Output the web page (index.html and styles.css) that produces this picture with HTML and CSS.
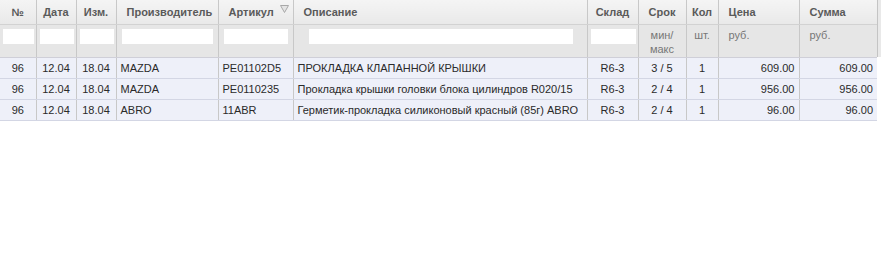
FILE: index.html
```html
<!DOCTYPE html>
<html lang="ru">
<head>
<meta charset="utf-8">
<title>Заказы</title>
<link rel="stylesheet" href="styles.css">
</head>
<body>
<div class="grid">
  <table class="orders">
    <colgroup>
      <col class="c-num"><col class="c-date"><col class="c-date"><col class="c-brand"><col class="c-art"><col class="c-desc"><col class="c-stock"><col class="c-term"><col class="c-qty"><col class="c-price"><col class="c-sum">
    </colgroup>
    <thead>
      <tr class="hdr">
        <th class="ac">№</th>
        <th class="ac">Дата</th>
        <th class="ac">Изм.</th>
        <th class="al pl">Производитель</th>
        <th class="al pl sortable">Артикул<svg class="sort" width="9" height="8" viewBox="0 0 9 8"><path d="M0.5 0.5 H8.5 L4.5 7.5 Z" fill="#e4e4e4" stroke="#a8a8a8" stroke-width="1"/></svg></th>
        <th class="al pl">Описание</th>
        <th class="ac">Склад</th>
        <th class="ac">Срок</th>
        <th class="ac">Кол</th>
        <th class="al pl">Цена</th>
        <th class="al pl">Сумма</th>
      </tr>
      <tr class="flt">
        <td><input class="fi" type="text"></td>
        <td><input class="fi" type="text"></td>
        <td><input class="fi" type="text"></td>
        <td class="fp"><input class="fi" type="text"></td>
        <td class="fp"><input class="fi" type="text"></td>
        <td class="fd"><input class="fi" type="text"></td>
        <td><input class="fi" type="text"></td>
        <td class="unit ac">мин/<br>макс</td>
        <td class="unit ac">шт.</td>
        <td class="unit pl">руб.</td>
        <td class="unit pl">руб.</td>
      </tr>
    </thead>
    <tbody>
      <tr>
        <td class="ac">96</td><td class="ac">12.04</td><td class="ac">18.04</td><td>MAZDA</td><td>PE01102D5</td><td>ПРОКЛАДКА КЛАПАННОЙ КРЫШКИ</td><td class="ac">R6-3</td><td class="ac">3 / 5</td><td class="ac">1</td><td class="ar">609.00</td><td class="ar">609.00</td>
      </tr>
      <tr>
        <td class="ac">96</td><td class="ac">12.04</td><td class="ac">18.04</td><td>MAZDA</td><td>PE0110235</td><td>Прокладка крышки головки блока цилиндров R020/15</td><td class="ac">R6-3</td><td class="ac">2 / 4</td><td class="ac">1</td><td class="ar">956.00</td><td class="ar">956.00</td>
      </tr>
      <tr>
        <td class="ac">96</td><td class="ac">12.04</td><td class="ac">18.04</td><td>ABRO</td><td>11ABR</td><td>Герметик-прокладка силиконовый красный (85г) ABRO</td><td class="ac">R6-3</td><td class="ac">2 / 4</td><td class="ac">1</td><td class="ar">96.00</td><td class="ar">96.00</td>
      </tr>
    </tbody>
  </table>
  <div class="hdr-fill"></div>
</div>
</body>
</html>
```

FILE: styles.css
```css
html, body {
  margin: 0;
  padding: 0;
  background: #ffffff;
}

body {
  font-family: "Liberation Sans", Arial, sans-serif;
  font-size: 11px;
  color: #2a2a2a;
}

.grid {
  display: flex;
  align-items: flex-start;
  width: 881px;
}

.hdr-fill {
  flex: 1;
  height: 57px;
  border-left: 1px solid #c4c4c4;
  background: #e9e9e9;
}

.orders {
  table-layout: fixed;
  border-collapse: collapse;
  width: 877px;
}

.c-num { width: 36px; }
.c-date { width: 40px; }
.c-brand { width: 102px; }
.c-art { width: 75px; }
.c-desc { width: 294px; }
.c-stock { width: 51px; }
.c-term { width: 48px; }
.c-qty { width: 32px; }
.c-price { width: 81px; }
.c-sum { width: 78px; }

.orders th,
.orders td {
  padding: 0 4px;
  white-space: nowrap;
  overflow: hidden;
}

.orders th:first-child,
.orders td:first-child {
  border-left: 0;
}

.hdr th {
  height: 24px;
  font-weight: bold;
  color: #5a5a5a;
  background: linear-gradient(#f4f4f4, #e9e9e9);
  border-left: 1px solid #c8c8c8;
  border-bottom: 1px solid #d2d2d2;
  vertical-align: middle;
}

.hdr th.pl { padding-left: 10px; }

.sortable { position: relative; }

.sort {
  position: absolute;
  right: 4px;
  top: 5px;
}

.flt td {
  height: 28px;
  background: #e6e6e6;
  border-left: 1px solid #c8c8c8;
  border-bottom: 1px solid #cfcfd8;
  vertical-align: top;
  padding: 4px 2px 0 3px;
}

.flt td.fp { padding: 4px 5px 0 5px; }
.flt td.fd { padding: 4px 14px 0 15px; }

.fi {
  display: block;
  box-sizing: border-box;
  width: 100%;
  height: 15px;
  margin: 0;
  border: 0;
  padding: 0;
  background: #ffffff;
}

.flt td.unit {
  height: 29px;
  color: #777777;
  font-size: 11px;
  line-height: 14px;
  padding: 3px 4px 0 4px;
}

.flt td.unit.pl { padding-left: 10px; }

tbody td {
  height: 20px;
  background: #eef0f9;
  border-left: 1px solid #c8c8c8;
  border-bottom: 1px solid #d3d6e4;
  color: #2a2a2a;
}

.ac { text-align: center; }
.al { text-align: left; }
.ar { text-align: right; }
```
